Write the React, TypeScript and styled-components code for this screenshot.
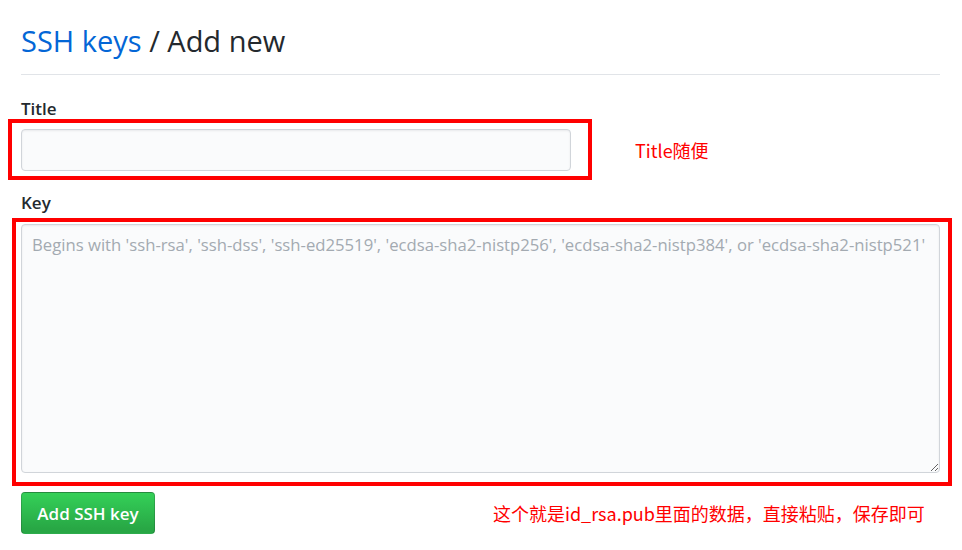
import * as React from "react";
import styled, { createGlobalStyle } from "styled-components";

const GlobalStyle = createGlobalStyle`
	html, body {
		margin: 0;
		padding: 0;
		background: #ffffff;
	}
	body {
		font-family: "Open Sans", "Noto Sans", "Liberation Sans", sans-serif;
		color: #24292e;
	}
`;

const App: React.FC = (): JSX.Element => {
	return (
		<>
			<GlobalStyle />
			<StyledPage>
				<div className="subhead">
					<h2 className="heading">
						<a href="#">SSH keys</a> / Add new
					</h2>
				</div>

				<label className="label title-label">Title</label>
				<div className="row">
					<Annotation $pad="6px 17px 5px 9px" $shift={13}>
						<input className="field" type="text" />
					</Annotation>
					<Note $size={18} $gap={43}>
						Title随便
					</Note>
				</div>

				<label className="label key-label">Key</label>
				<Annotation $pad="2px 8px 9px 5px" $shift={9} $width={940}>
					<textarea
						className="key"
						placeholder="Begins with 'ssh-rsa', 'ssh-dss', 'ssh-ed25519', 'ecdsa-sha2-nistp256', 'ecdsa-sha2-nistp384', or 'ecdsa-sha2-nistp521'"
					/>
				</Annotation>

				<div className="row actions">
					<button className="btn-primary" type="button">
						Add SSH key
					</button>
					<Note $size={18} $gap={338}>
						这个就是id_rsa.pub里面的数据，直接粘贴，保存即可
					</Note>
				</div>
			</StyledPage>
		</>
	);
};

export default App;

const StyledPage = styled.div`
	padding: 0 22px 0 21px;
	width: 919px;

	.subhead {
		margin-top: 23px;
		padding-bottom: 15px;
		border-bottom: 1px solid #e1e4e8;
	}

	.heading {
		margin: 0;
		font-size: 29px;
		line-height: 36px;
		font-weight: 400;
		color: #24292e;
	}

	.heading a {
		color: #0366d6;
		text-decoration: none;
	}

	.label {
		display: block;
		height: 20px;
		line-height: 20px;
		font-size: 17px;
		font-weight: 600;
		color: #24292e;
	}

	.title-label {
		margin-top: 24px;
	}

	.key-label {
		margin-top: 13px;
		margin-bottom: 5px;
	}

	.row {
		display: flex;
		align-items: center;
	}

	.field {
		display: block;
		box-sizing: border-box;
		width: 550px;
		height: 42px;
		padding: 7px 10px;
		font-size: 17px;
		font-family: inherit;
		background-color: #fafbfc;
		border: 1px solid #d1d5da;
		border-radius: 4px;
		box-shadow: inset 0 1px 2px rgba(27, 31, 35, 0.075);
		outline: none;
	}

	.key {
		display: block;
		box-sizing: border-box;
		width: 919px;
		height: 249px;
		padding: 10px 10px;
		font-size: 16.7px;
		line-height: 20px;
		font-family: inherit;
		color: #24292e;
		background-color: #fafbfc;
		border: 1px solid #d1d5da;
		border-radius: 4px;
		box-shadow: inset 0 1px 2px rgba(27, 31, 35, 0.075);
		outline: none;
		resize: vertical;
	}

	.key::placeholder {
		color: #a3aab1;
		opacity: 1;
	}

	.actions {
		margin-top: 6px;
	}

	.btn-primary {
		flex-shrink: 0;
		box-sizing: border-box;
		width: 134px;
		height: 42px;
		padding: 0;
		font-family: inherit;
		font-size: 17px;
		font-weight: 600;
		color: #ffffff;
		background-color: #28a745;
		background-image: linear-gradient(-180deg, #34d058 0%, #28a745 90%);
		border: 1px solid rgba(27, 31, 35, 0.2);
		border-radius: 4px;
		cursor: pointer;
	}
`;

const Annotation = styled.div<{ $pad: string; $shift: number; $width?: number }>`
	box-sizing: border-box;
	display: inline-block;
	flex-shrink: 0;
	margin-left: -${(p) => p.$shift}px;
	width: ${(p) => (p.$width ? `${p.$width}px` : "auto")};
	padding: ${(p) => p.$pad};
	border: 4px solid #ff0000;
`;

const Note = styled.span<{ $size: number; $gap: number }>`
	margin-left: ${(p) => p.$gap}px;
	font-family: "Microsoft YaHei", "Noto Sans CJK SC", sans-serif;
	font-size: ${(p) => p.$size}px;
	color: #ff0000;
	white-space: nowrap;
`;
